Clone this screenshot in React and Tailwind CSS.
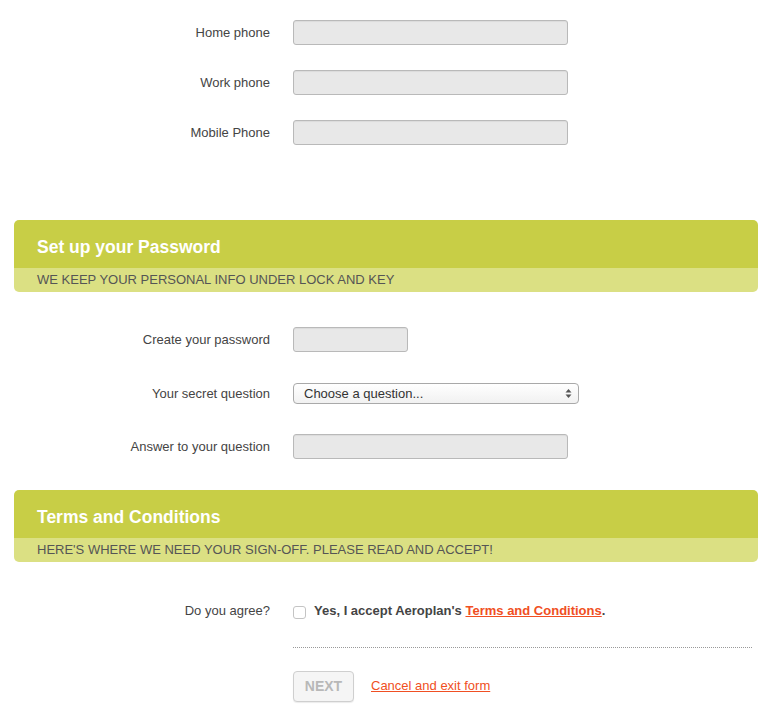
import React from 'react'

const font = { fontFamily: '"Liberation Sans", Arial, Helvetica, sans-serif' }

function Row({ label, children, className = '' }) {
    return (
        <div className={`flex items-center ${className}`}>
            <div className="w-[270px] text-right text-[13px] text-[#444]">{label}</div>
            <div className="ml-[23px] flex items-center">{children}</div>
        </div>
    )
}

function TextBox({ width }) {
    return (
        <div
            className={`${width} h-[25px] rounded-[3px] border border-[#b9b9b9] bg-[#e8e8e8] shadow-[inset_0_1px_1px_rgba(0,0,0,0.06)]`}
        />
    )
}

function SectionHeader({ title, subtitle }) {
    return (
        <div className="ml-[14px] mr-[10px] rounded-[5px] overflow-hidden">
            <div className="h-[48px] bg-[#c8ce46] flex items-end pl-[23px] pb-[12px]">
                <h2 className="text-[17.5px] font-bold text-white leading-none">{title}</h2>
            </div>
            <div className="h-[24px] bg-[#dbe083] flex items-center pl-[23px]">
                <p className="text-[13px] text-[#555] uppercase leading-none -mt-[1px]">{subtitle}</p>
            </div>
        </div>
    )
}

export default function App() {
    return (
        <div style={font} className="w-[768px] h-[724px] bg-white overflow-hidden pt-[20px]">
            {/* Contact numbers */}
            <Row label="Home phone"><TextBox width="w-[275px]" /></Row>
            <Row label="Work phone" className="mt-[25px]"><TextBox width="w-[275px]" /></Row>
            <Row label="Mobile Phone" className="mt-[25px]"><TextBox width="w-[275px]" /></Row>

            <div className="mt-[75px]">
                <SectionHeader title="Set up your Password" subtitle="We keep your personal info under lock and key" />
            </div>

            <Row label="Create your password" className="mt-[35px]"><TextBox width="w-[115px]" /></Row>
            <Row label="Your secret question" className="mt-[31px]">
                <div className="w-[286px] h-[21px] rounded-[4px] border border-[#a9a9a9] bg-gradient-to-b from-white to-[#f1f1f1] flex items-center justify-between pl-[10px] pr-[6px] text-[13px] text-[#333]">
                    <span>Choose a question...</span>
                    <svg width="7" height="11" viewBox="0 0 7 11">
                        <path d="M3.5 1 L6.5 4.5 L0.5 4.5 Z" fill="#555" />
                        <path d="M3.5 10 L6.5 6.5 L0.5 6.5 Z" fill="#555" />
                    </svg>
                </div>
            </Row>
            <Row label="Answer to your question" className="mt-[30px]"><TextBox width="w-[275px]" /></Row>

            <div className="mt-[31px]">
                <SectionHeader title="Terms and Conditions" subtitle="Here's where we need your sign-off. Please read and accept!" />
            </div>

            <Row label="Do you agree?" className="mt-[39px]">
                <div className="w-[13px] h-[13px] rounded-[3px] border border-[#c4c4c4] bg-white mt-[4px]" />
                <p className="ml-[8px] text-[13px] font-bold text-[#444]">
                    Yes, I accept Aeroplan's{' '}
                    <a href="#" className="text-[#f04f23] underline">Terms and Conditions</a>.
                </p>
            </Row>

            <div className="ml-[293px] mr-[16px] mt-[26px] border-t border-dotted border-[#999]" />

            <div className="ml-[293px] mt-[23px] flex items-center">
                <button className="w-[61px] h-[31px] rounded-[4px] border border-[#cfcfcf] bg-[#f5f5f5] text-[14px] font-bold text-[#b8b8b8] shadow-[0_1px_1px_rgba(0,0,0,0.08)]">
                    NEXT
                </button>
                <a href="#" className="ml-[17px] text-[13px] text-[#f04f23] underline">Cancel and exit form</a>
            </div>
        </div>
    )
}
